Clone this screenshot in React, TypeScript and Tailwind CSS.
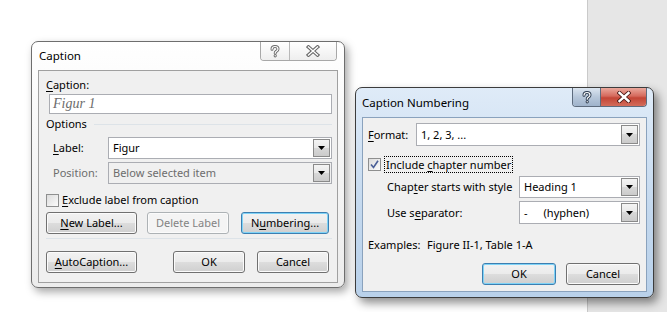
import React from "react";

function U({ children }: { children: React.ReactNode }) {
  return <span className="underline underline-offset-[2px] decoration-[1px]">{children}</span>;
}

function Btn({
  children,
  className,
  disabled,
  focused,
}: {
  children: React.ReactNode;
  className: string;
  disabled?: boolean;
  focused?: boolean;
}) {
  const border = focused ? "border-[#3c7fb1]" : disabled ? "border-[#adb2b5]" : "border-[#707070]";
  const bg = disabled
    ? "bg-[#f4f4f4] text-[#838383]"
    : "bg-[linear-gradient(#f2f2f2_0%,#ebebeb_50%,#dddddd_50%,#cfcfcf_100%)] text-black";
  const inner = focused ? "shadow-[inset_0_0_0_1px_#7fd3f7]" : "shadow-[inset_0_0_0_1px_#fbfbfb]";
  return (
    <div className={`flex h-[22px] items-center justify-center rounded-[3px] border ${border} ${bg} ${inner} ${className}`}>
      {children}
    </div>
  );
}

function Arrow() {
  return (
    <svg width="7" height="4" viewBox="0 0 7 4">
      <path d="M0 0h7L3.5 4z" fill="#000" />
    </svg>
  );
}

function Select({
  value,
  className,
  disabled,
}: {
  value: React.ReactNode;
  className: string;
  disabled?: boolean;
}) {
  return (
    <div
      className={`flex border border-[#abadb3] ${disabled ? "bg-[#f0f0f0] text-[#6d6d6d]" : "bg-white text-black"} ${className}`}
    >
      <div className="flex flex-1 items-center whitespace-nowrap pl-[4px]">{value}</div>
      <div className="my-px mr-px flex w-[17px] items-center justify-center border border-[#8a8a8a] bg-[linear-gradient(#f4f4f4_0%,#e8e8e8_50%,#d8d8d8_50%,#cbcbcb_100%)]">
        <Arrow />
      </div>
    </div>
  );
}

function HelpIcon({ active }: { active?: boolean }) {
  return (
    <svg width="10" height="13" viewBox="0 0 10 13">
      <path
        d="M2 4.2C2 2.3 3.3 1.5 5 1.5s3 .9 3 2.5c0 1.5-1.2 2-2 2.6-.6.4-.8.8-.8 1.6"
        fill="none"
        stroke={active ? "#2b3a4e" : "#6a6a6a"}
        strokeWidth="3"
        strokeLinecap="round"
      />
      <path
        d="M2 4.2C2 2.3 3.3 1.5 5 1.5s3 .9 3 2.5c0 1.5-1.2 2-2 2.6-.6.4-.8.8-.8 1.6"
        fill="none"
        stroke="#fff"
        strokeWidth="1.2"
        strokeLinecap="round"
      />
      <circle cx="5.2" cy="10.8" r="1.6" fill={active ? "#2b3a4e" : "#6a6a6a"} />
      <circle cx="5.2" cy="10.8" r="0.7" fill="#fff" />
    </svg>
  );
}

function CloseIcon({ active }: { active?: boolean }) {
  return (
    <svg width="14" height="12" viewBox="0 0 14 12">
      <path
        d="M2.5 2L11.5 10M11.5 2L2.5 10"
        fill="none"
        stroke={active ? "#4a1a16" : "#6a6a6a"}
        strokeWidth={active ? 4.2 : 3.6}
        strokeLinecap="square"
      />
      <path
        d="M2.5 2L11.5 10M11.5 2L2.5 10"
        fill="none"
        stroke="#fff"
        strokeWidth={active ? 2.4 : 1.4}
        strokeLinecap="square"
      />
    </svg>
  );
}

function Checkbox({ checked }: { checked?: boolean }) {
  return (
    <div className="flex h-[13px] w-[13px] shrink-0 items-center justify-center border border-[#8e8f8f] bg-[linear-gradient(135deg,#dcdcdc,#fbfbfb)]">
      {checked && (
        <svg width="9" height="9" viewBox="0 0 9 9">
          <path d="M1 4.5L3.5 7.5L8 0.8" fill="none" stroke="#4a5f97" strokeWidth="1.6" />
        </svg>
      )}
    </div>
  );
}

export default function App() {
  return (
    <div className="relative flex h-[312px] w-[667px] overflow-hidden bg-white font-['Noto_Sans',sans-serif] text-[11px] leading-[16px] text-black">
      <div className="w-[587px] bg-white" />
      <div className="flex-1 border-l border-[#cacaca] bg-[#e6e6e6]" />

      {/* Caption dialog (inactive) */}
      <div className="absolute left-[31px] top-[41px] flex h-[247px] w-[314px] flex-col rounded-[7px] border border-[#6e6e6e] bg-[linear-gradient(#ffffff,#ececec)] shadow-[3px_4px_8px_rgba(0,0,0,0.35)]">
        <div className="relative flex h-[28px] shrink-0 items-center pl-[7px]">
          <span className="text-[11.5px]">Caption</span>
          <div className="absolute right-[7px] top-0 flex h-[19px] overflow-hidden rounded-b-[4px] border border-t-0 border-[#a8a8a8]">
            <div className="flex w-[29px] items-center justify-center border-r border-[#b8b8b8] bg-[linear-gradient(#ffffff,#eeeeee)]">
              <HelpIcon />
            </div>
            <div className="flex w-[46px] items-center justify-center bg-[linear-gradient(#ffffff,#eeeeee)]">
              <CloseIcon />
            </div>
          </div>
        </div>
        <div className="mx-[6px] mb-[4px] flex flex-1 flex-col border border-[#a0a0a0] bg-[#f0f0f0] pl-[7px] pr-[5px]">
          <div className="mt-[6px]">
            <U>C</U>aption:
          </div>
          <div className="ml-[3px] mt-px flex h-[20px] items-center border border-[#abadb3] bg-white pl-[3px] font-['Liberation_Serif',serif] text-[14px] italic text-[#6d6d6d]">
            Figur 1
          </div>
          <div className="mt-[2px] flex items-center gap-[7px]">
            <span>Options</span>
            <div className="h-px flex-1 bg-[#dde3e8]" />
          </div>
          <div className="mt-[5px] flex items-center">
            <span className="ml-[7px] w-[55px]">
              <U>L</U>abel:
            </span>
            <Select value="Figur" className="h-[22px] flex-1" />
          </div>
          <div className="mt-[3px] flex items-center">
            <span className="ml-[7px] w-[55px] text-[#6d6d6d]">Position:</span>
            <Select value="Below selected item" className="h-[22px] flex-1" disabled />
          </div>
          <div className="mt-[8px] flex items-center gap-[3px]">
            <Checkbox />
            <span>
              <U>E</U>xclude label from caption
            </span>
          </div>
          <div className="mt-[4px] flex items-center">
            <Btn className="w-[91px]">
              <span>
                <U>N</U>ew Label...
              </span>
            </Btn>
            <Btn className="ml-[10px] w-[82px]" disabled>
              Delete Label
            </Btn>
            <Btn className="ml-[12px] w-[88px]" focused>
              <span>
                N<U>u</U>mbering...
              </span>
            </Btn>
          </div>
          <div className="mt-[4px] h-px bg-[#dde3e8]" />
          <div className="mt-[12px] flex items-center">
            <Btn className="w-[91px]">
              <span>
                <U>A</U>utoCaption...
              </span>
            </Btn>
            <Btn className="ml-[36px] w-[72px]">OK</Btn>
            <Btn className="ml-[12px] w-[72px]">Cancel</Btn>
          </div>
        </div>
      </div>

      {/* Caption Numbering dialog (active) */}
      <div className="absolute left-[355px] top-[87px] flex h-[211px] w-[299px] flex-col rounded-[7px] border border-[#3c3c3c] bg-[linear-gradient(#dfebf8,#c3d8ee_60%,#b9d1ea)] shadow-[4px_5px_10px_rgba(0,0,0,0.45)]">
        <div className="relative flex h-[29px] shrink-0 items-center pl-[6px]">
          <span className="text-[11.5px]">Caption Numbering</span>
          <div className="absolute right-[6px] top-0 flex h-[19px] overflow-hidden rounded-b-[4px] border border-t-0 border-[#5d6b7d]">
            <div className="flex w-[28px] items-center justify-center border-r border-[#5d6b7d] bg-[linear-gradient(#dbe5f0,#b7c7da_50%,#9fb3cb)]">
              <HelpIcon active />
            </div>
            <div className="flex w-[45px] items-center justify-center bg-[linear-gradient(#eaa89c,#d5695c_45%,#c34536_55%,#d36c5a)]">
              <CloseIcon active />
            </div>
          </div>
        </div>
        <div className="mx-[6px] mb-[5px] flex flex-1 flex-col border border-[#8aa2bd] bg-[#f0f0f0] pl-[5px] pr-[6px]">
          <div className="mt-[5px] flex items-center">
            <span className="w-[48px]">
              <U>F</U>ormat:
            </span>
            <Select value="1, 2, 3, ..." className="h-[23px] flex-1" />
          </div>
          <div className="mt-[10px] flex items-center">
            <Checkbox checked />
            <span className="ml-[3px] whitespace-nowrap border border-dotted border-black px-[1px] leading-[15px]">
              Include <U>c</U>hapter number
            </span>
          </div>
          <div className="mt-[3px] flex items-center">
            <span className="ml-[19px] w-[132px] whitespace-nowrap">
              Chap<U>t</U>er starts with style
            </span>
            <Select value="Heading 1" className="h-[22px] flex-1" />
          </div>
          <div className="mt-[3px] flex items-center">
            <span className="ml-[19px] w-[132px] whitespace-nowrap">
              Use s<U>e</U>parator:
            </span>
            <Select
              value={
                <span>
                  -<span className="ml-[16px]">(hyphen)</span>
                </span>
              }
              className="h-[23px] flex-1"
            />
          </div>
          <div className="mt-[13px] flex items-center whitespace-nowrap">
            <span className="w-[59px]">Examples:</span>
            <span>Figure II-1, Table 1-A</span>
          </div>
          <div className="mt-[10px] flex items-center justify-end">
            <Btn className="w-[74px]" focused>
              OK
            </Btn>
            <Btn className="ml-[10px] w-[74px]">Cancel</Btn>
          </div>
        </div>
      </div>
    </div>
  );
}
